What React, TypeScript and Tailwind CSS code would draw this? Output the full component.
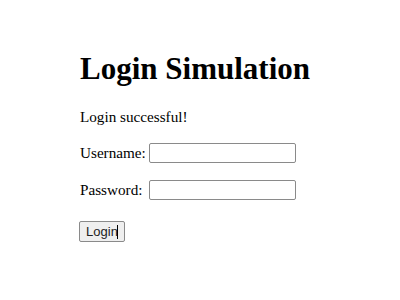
export default function App() {
  return (
    <div className="min-h-screen bg-white pl-[80px] pt-[50px] font-['Liberation_Serif',serif] text-black">
      <h1 className="text-[31px] font-bold leading-[37px]">Login Simulation</h1>
      <p className="mt-[21px] text-[15.2px] leading-[18px]">Login successful!</p>

      <div className="mt-[17px] flex h-[20px] items-center gap-[3px] text-[15.2px]">
        <label htmlFor="username" className="w-[66px]">Username:</label>
        <input
          id="username"
          type="text"
          className="h-[20px] w-[147px] rounded-[2px] border border-[#8a8a8a] bg-white px-1 outline-none"
        />
      </div>

      <div className="mt-[17px] flex h-[20px] items-center gap-[3px] text-[15.2px]">
        <label htmlFor="password" className="w-[66px]">Password:</label>
        <input
          id="password"
          type="password"
          className="h-[20px] w-[147px] rounded-[2px] border border-[#8a8a8a] bg-white px-1 outline-none"
        />
      </div>

      <div className="mt-[19px]">
        <button
          type="button"
          className="relative ml-[-1px] h-[21px] w-[46px] rounded-[2px] border border-[#8a8a8a] bg-[#efefef] font-['Liberation_Sans',sans-serif] text-[13px] leading-[19px] text-[#222]"
        >
          Login
          <span className="absolute left-[37px] top-[3px] h-[14px] w-px bg-black" />
        </button>
      </div>
    </div>
  );
}
